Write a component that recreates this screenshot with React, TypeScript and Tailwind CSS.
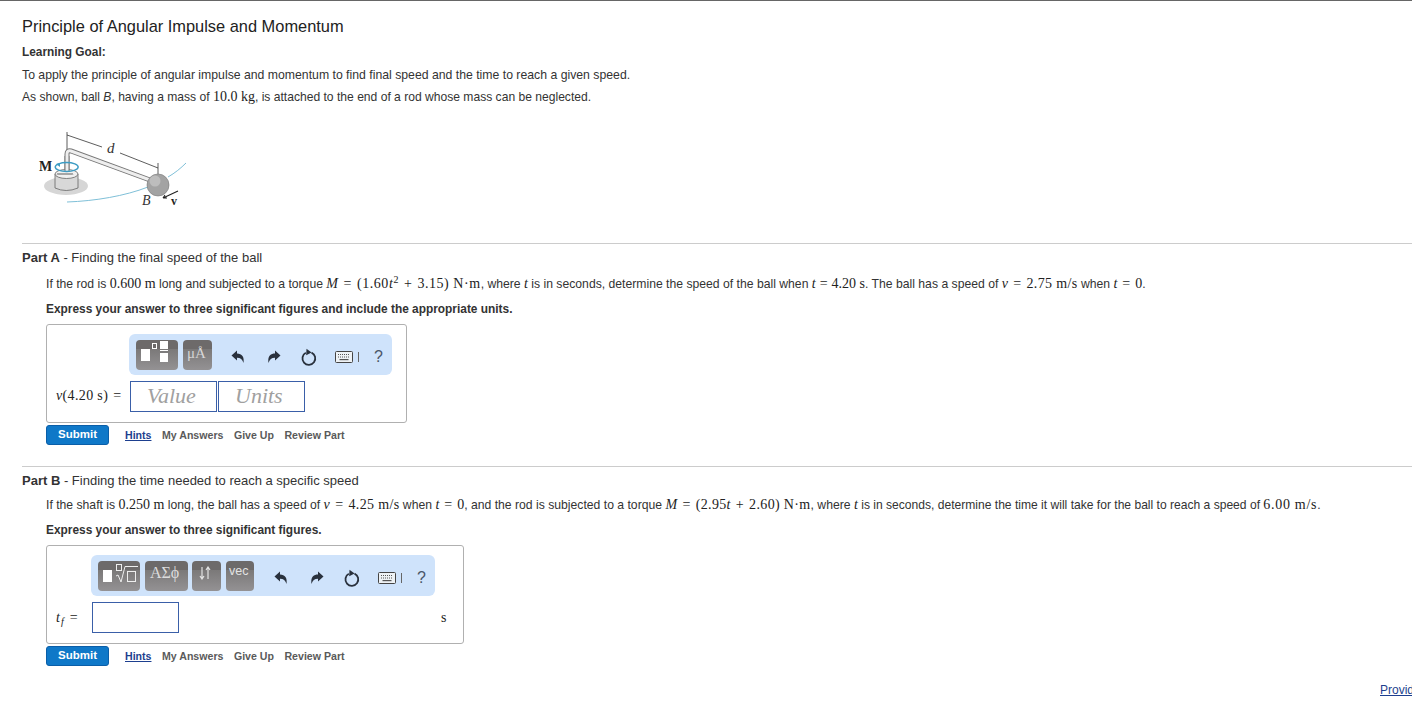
import React from 'react';

const M: React.FC<{ children: React.ReactNode; className?: string }> = ({ children, className = '' }) => (
  <span className={`font-['Liberation_Serif',serif] text-[14px] text-[#222] ${className}`}>{children}</span>
);

const I: React.FC<{ children: React.ReactNode }> = ({ children }) => <i className="italic">{children}</i>;

// math operators sit wider apart than plain spaces
const Op: React.FC<{ children: React.ReactNode }> = ({ children }) => <span className="mx-[4px]">{children}</span>;
const WideOp: React.FC<{ children: React.ReactNode }> = ({ children }) => <span className="mx-[5px]">{children}</span>;

const Diagram = () => (
  <svg width="190" height="100" viewBox="0 0 190 100">
    <ellipse cx="46" cy="66" rx="22" ry="9" fill="#d6d6d6" />
    <path d="M47 82 C75 81 105 76 128 67 M148 57 C155 53 161 48 166 43" fill="none" stroke="#7fc0d8" strokeWidth="1" />
    <path d="M47 12 V30 M47 15 L82 27 M100 33 L138 48 M138 43 V54" stroke="#333" strokeWidth="0.8" fill="none" />
    <path d="M47 52 V34 Q47 30 51 31 L130 60" fill="none" stroke="#777" strokeWidth="5" />
    <path d="M47 52 V34 Q47 30 51 31 L130 60" fill="none" stroke="#eeeeee" strokeWidth="3" />
    <path d="M35 54 V68 Q46 73 58 68 V54 Z" fill="#d8d8d8" stroke="#666" strokeWidth="0.8" />
    <ellipse cx="46.5" cy="54" rx="11.5" ry="4.5" fill="#f0f0f0" stroke="#666" strokeWidth="0.8" />
    <path d="M37 55 l1 -2 1 2 1 -2 1 2 1 -2 1 2 1 -2 1 2 1 -2 1 2 1 -2 1 2 1 -2 1 2 1 -2 1 2" fill="none" stroke="#666" strokeWidth="0.6" />
    <path d="M47 52 V36" stroke="#777" strokeWidth="5" />
    <path d="M47 52 V36" stroke="#eeeeee" strokeWidth="3" />
    <ellipse cx="46.7" cy="47" rx="11.5" ry="4.5" fill="none" stroke="#3d9cc4" strokeWidth="1.4" />
    <path d="M40 43 L36 44 L40 47 Z" fill="#3d9cc4" />
    <circle cx="138" cy="65" r="11" fill="#a3a3a3" stroke="#777" strokeWidth="0.6" />
    <circle cx="135" cy="61" r="5.5" fill="#bdbdbd" />
    <path d="M143 78 L158 71 M143 78 l4 0 M143 78 l2 -3" stroke="#222" strokeWidth="1.1" fill="none" />
    <text x="19" y="51" fontFamily="Liberation Serif, serif" fontWeight="700" fontSize="14" fill="#222">M</text>
    <text x="87" y="33" fontFamily="Liberation Serif, serif" fontStyle="italic" fontSize="15" fill="#333">d</text>
    <text x="122" y="85" fontFamily="Liberation Serif, serif" fontStyle="italic" fontSize="14" fill="#333">B</text>
    <text x="151" y="85" fontFamily="Liberation Serif, serif" fontWeight="700" fontSize="12" fill="#222">v</text>
  </svg>
);

const ToolBtn: React.FC<{ className: string; children: React.ReactNode }> = ({ className, children }) => (
  <div className={`relative h-[30px] overflow-hidden rounded-[4px] bg-gradient-to-b from-[#6d6a6a] from-[30%] via-[#7b7979] via-[31%] to-[#949294] ${className}`}>
    {children}
  </div>
);

const Undo = () => (
  <svg width="14" height="14" viewBox="0 0 14 14" fill="#29313d">
    <path d="M0.5 5.5 L6 0.5 V3.5 C11 3.5 13.5 7 12.5 13 C11.5 9.5 9.5 7.8 6 7.8 V10.5 Z" />
  </svg>
);

const Keys = () => (
  <svg width="18" height="12" viewBox="0 0 18 12">
    <rect x="0.5" y="0.5" width="17" height="11" rx="1" fill="#eef2f5" stroke="#444" />
    <path d="M3 3.5 H15 M3 6 H15" stroke="#555" strokeWidth="1.2" strokeDasharray="1 1" />
    <path d="M4.5 8.6 H13.5" stroke="#555" strokeWidth="1.2" />
  </svg>
);

const Controls = () => (
  <div className="mt-[4px] flex items-center text-[#29313d]">
    <Undo />
    <div className="ml-[22px] -scale-x-100"><Undo /></div>
    <svg className="ml-[20px]" width="16" height="18" viewBox="0 0 16 18" fill="none">
      <path d="M4.8 4.8 A6.4 6.4 0 1 0 10.5 4.6" stroke="#29313d" strokeWidth="1.8" />
      <path d="M5.5 0.8 L10.6 4.6 L5.2 7.2 Z" fill="#29313d" />
    </svg>
    <div className="ml-[18px]"><Keys /></div>
    <div className="ml-[5px] h-[10px] w-px bg-[#666]" />
    <span className="ml-[15px] text-[16px] leading-none text-[#4a5568]">?</span>
  </div>
);

const Actions = () => (
  <div className="mt-[2px] flex items-center">
    <button className="h-[20px] w-[63px] rounded-[3px] border border-[#0a5ea8] bg-[#0f78c8] text-[11.5px] font-bold text-white">Submit</button>
    <div className="ml-[16px] flex gap-[10.5px] pt-px text-[10.6px] font-bold text-[#5a5a5a]">
      <span className="text-[#1d3f8f] underline">Hints</span>
      <span>My Answers</span>
      <span>Give Up</span>
      <span>Review Part</span>
    </div>
  </div>
);

const Placeholder: React.FC<{ children?: React.ReactNode }> = ({ children }) => (
  <div className="flex h-[31px] w-[87px] items-center border border-[#3a5fa8] bg-white pb-[2px] pl-[16px] font-['Liberation_Serif',serif] text-[22px] italic text-[#a0a0a0]">
    {children}
  </div>
);

const PartA = () => (
  <div>
    <div className="text-[12.2px] leading-[18px] whitespace-nowrap text-[#333]">
      If the rod is <M>0.600 m</M> long and subjected to a torque <M className="tracking-[0.55px]"><I>M</I><WideOp>=</WideOp>(1.60<I>t</I><sup className="text-[10px]">2</sup><WideOp>+</WideOp>3.15) N·m</M>, where <M><I>t</I></M> is in seconds, determine the speed of the ball when <M><I>t</I><Op>=</Op>4.20 s</M>. The ball has a speed of <M className="tracking-[0.35px]"><I>v</I><WideOp>=</WideOp>2.75 m/s</M> when <M><I>t</I><WideOp>=</WideOp>0</M>.
    </div>
    <div className="mt-[8px] text-[11.9px] leading-[16px] font-bold text-[#333]">Express your answer to three significant figures and include the appropriate units.</div>
    <div className="mt-[7px] h-[99px] w-[361px] rounded-[3px] border border-[#b0b0b0] pt-[9px]">
      <div className="ml-[82px] flex h-[41px] w-[263px] items-center rounded-[6px] bg-[#cfe3fb] pl-[7px]">
        <ToolBtn className="w-[42px]">
          <div className="absolute top-[9px] left-[5px] h-[12px] w-[9px] bg-white" />
          <div className="absolute top-[3px] left-[16px] h-[6px] w-[5px] border border-white" />
          <div className="absolute top-[1px] left-[24px] h-[8px] w-[8px] bg-white" />
          <div className="absolute top-[10px] left-[24px] h-px w-[8px] bg-white" />
          <div className="absolute top-[13px] left-[24px] h-[9px] w-[8px] bg-white" />
        </ToolBtn>
        <ToolBtn className="ml-[5px] w-[29px]">
          <span className="absolute top-[5px] left-[4px] font-['Liberation_Serif',serif] text-[15px] leading-[16px] text-[#d6d6d6]">μÅ</span>
        </ToolBtn>
        <div className="ml-[19px]"><Controls /></div>
      </div>
      <div className="mt-[6px] flex items-center pl-[9px]">
        <M className="w-[74px] pb-[2px] text-[13.5px] tracking-[0.35px] whitespace-nowrap"><I>v</I>(4.20 s)<WideOp>=</WideOp></M>
        <Placeholder>Value</Placeholder>
        <div className="ml-px"><Placeholder>Units</Placeholder></div>
      </div>
    </div>
    <Actions />
  </div>
);

const PartB = () => (
  <div>
    <div className="text-[12.2px] leading-[18px] whitespace-nowrap text-[#333]">
      If the shaft is <M>0.250 m</M> long, the ball has a speed of <M className="tracking-[0.35px]"><I>v</I><WideOp>=</WideOp>4.25 m/s</M> when <M><I>t</I><WideOp>=</WideOp>0</M>, and the rod is subjected to a torque <M className="tracking-[0.35px]"><I>M</I><WideOp>=</WideOp>(2.95<I>t</I><WideOp>+</WideOp>2.60) N·m</M>, where <M><I>t</I></M><span className="text-[12.08px]"> is in seconds, determine the time it will take for the ball to reach a speed of </span><M className="tracking-[0.7px]">6.00 m/s</M>.
    </div>
    <div className="mt-[8px] text-[11.9px] leading-[16px] font-bold text-[#333]">Express your answer to three significant figures.</div>
    <div className="mt-[7px] h-[99px] w-[418px] rounded-[3px] border border-[#b0b0b0] pt-[9px]">
      <div className="ml-[44px] flex h-[41px] w-[344px] items-center rounded-[6px] bg-[#cfe3fb] pl-[7px]">
        <ToolBtn className="w-[42px]">
          <div className="absolute top-[9px] left-[5px] h-[12px] w-[9px] bg-white" />
          <svg className="absolute top-0 left-[17px]" width="24" height="24" viewBox="0 0 24 24" fill="none" stroke="#eee">
            <rect x="1.5" y="3.5" width="5" height="6" />
            <path d="M1 15 L3 14 L6 21 L10 5.5 H23" />
            <rect x="12.5" y="10.5" width="8" height="10" />
          </svg>
        </ToolBtn>
        <ToolBtn className="ml-[5px] w-[43px]">
          <span className="absolute top-[4px] left-[5px] font-['Liberation_Serif',serif] text-[16px] leading-[16px] text-[#dcdcdc]">ΑΣϕ</span>
        </ToolBtn>
        <ToolBtn className="ml-[4px] w-[29px]">
          <svg className="absolute top-[5px] left-[7px]" width="12" height="14" viewBox="0 0 12 14" fill="none" stroke="#e3e3e3" strokeWidth="1.2">
            <path d="M3 1 V13 M1 10 L3 13 L5 10 M9 13 V1 M7 4 L9 1 L11 4" />
          </svg>
        </ToolBtn>
        <ToolBtn className="ml-[5px] w-[28px]">
          <span className="absolute top-[2px] left-[3px] text-[12.5px] leading-[16px] text-[#e3e3e3]">vec</span>
        </ToolBtn>
        <div className="ml-[20px]"><Controls /></div>
      </div>
      <div className="mt-[6px] flex items-center pl-[9px]">
        <M className="w-[36px] text-[13.5px] tracking-[1px] whitespace-nowrap"><I>t</I><sub className="text-[10px]"><I>f</I></sub><span className="ml-[5px]">=</span></M>
        <Placeholder />
        <M className="ml-[262px] text-[12px]">s</M>
      </div>
    </div>
    <Actions />
  </div>
);

export default function App() {
  return (
    <div className="relative h-[709px] w-[1412px] overflow-hidden border-t border-[#666] bg-white font-['Liberation_Sans',Arial,sans-serif] text-[#333]">
      <div className="pt-[15px] pl-[22px]">
        <h1 className="text-[16.4px] leading-[20px] text-[#222]">Principle of Angular Impulse and Momentum</h1>
        <div className="mt-[8px] text-[11.87px] leading-[16px] font-bold">Learning Goal:</div>
        <p className="mt-[7px] text-[12.25px] leading-[16px]">To apply the principle of angular impulse and momentum to find final speed and the time to reach a given speed.</p>
        <p className="mt-[6px] text-[12.1px] leading-[16px]">As shown, ball <I>B</I>, having a mass of <M>10.0 kg</M>, is attached to the end of a rod whose mass can be neglected.</p>
        <div className="mt-[15px] -ml-[2px] h-[100px]"><Diagram /></div>

        <div className="mt-[23px] border-t border-[#ccc] pt-[6px]">
          <div className="text-[13px] leading-[16px]"><b>Part A</b> - Finding the final speed of the ball</div>
          <div className="mt-[9px] ml-[24px]"><PartA /></div>
        </div>

        <div className="mt-[21px] border-t border-[#ccc] pt-[6px]">
          <div className="text-[13px] leading-[16px]"><b>Part B</b> - Finding the time needed to reach a specific speed</div>
          <div className="mt-[7px] ml-[24px]"><PartB /></div>
        </div>
      </div>
      <a className="absolute top-[680px] left-[1380px] text-[12px] whitespace-nowrap text-[#1d3f8f] underline">Provide Feedback</a>
    </div>
  );
}
